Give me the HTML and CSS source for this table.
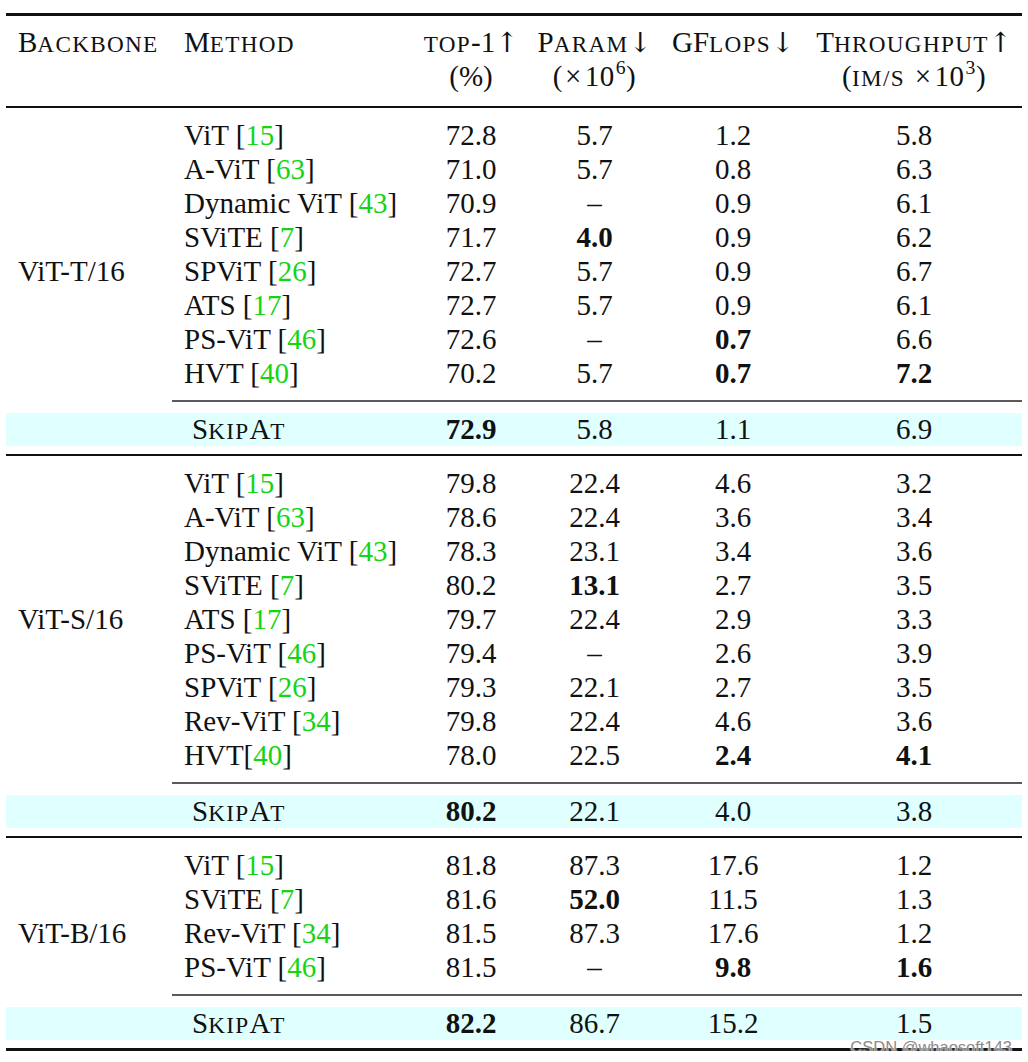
FILE: index.html
```html
<!DOCTYPE html>
<html>
<head>
<meta charset="utf-8">
<link rel="stylesheet" href="styles.css">
</head>
<body>
<div class="table">
  <div class="rule rule-thick"></div>
  <div class="head">
    <div class="row">
      <div class="c-bb">B<span class="sc">ackbone</span></div>
      <div class="c-m">M<span class="sc">ethod</span></div>
      <div class="c-n"><span class="sc">top</span>-1<span class="arr">↑</span></div>
      <div class="c-n">P<span class="sc">aram</span><span class="arr">↓</span></div>
      <div class="c-n">GF<span class="sc">lops</span><span class="arr">↓</span></div>
      <div class="c-n">T<span class="sc">hroughput</span><span class="arr">↑</span></div>
    </div>
    <div class="row">
      <div class="c-bb"></div>
      <div class="c-m"></div>
      <div class="c-n">(%)</div>
      <div class="c-n math">(<span class="times">×</span>10<sup>6</sup>)</div>
      <div class="c-n"></div>
      <div class="c-n math">(<span class="sc">im/s</span> <span class="times">×</span>10<sup>3</sup>)</div>
    </div>
  </div>
  <div class="rule rule-mid"></div>

  <div class="group">
    <div class="row"><div class="c-bb"></div><div class="c-m">ViT [<span class="cite">15</span>]</div><div class="c-n">72.8</div><div class="c-n">5.7</div><div class="c-n">1.2</div><div class="c-n">5.8</div></div>
    <div class="row"><div class="c-bb"></div><div class="c-m">A-ViT [<span class="cite">63</span>]</div><div class="c-n">71.0</div><div class="c-n">5.7</div><div class="c-n">0.8</div><div class="c-n">6.3</div></div>
    <div class="row"><div class="c-bb"></div><div class="c-m">Dynamic ViT [<span class="cite">43</span>]</div><div class="c-n">70.9</div><div class="c-n">–</div><div class="c-n">0.9</div><div class="c-n">6.1</div></div>
    <div class="row"><div class="c-bb"></div><div class="c-m">SViTE [<span class="cite">7</span>]</div><div class="c-n">71.7</div><div class="c-n b">4.0</div><div class="c-n">0.9</div><div class="c-n">6.2</div></div>
    <div class="row"><div class="c-bb">ViT-T/16</div><div class="c-m">SPViT [<span class="cite">26</span>]</div><div class="c-n">72.7</div><div class="c-n">5.7</div><div class="c-n">0.9</div><div class="c-n">6.7</div></div>
    <div class="row"><div class="c-bb"></div><div class="c-m">ATS [<span class="cite">17</span>]</div><div class="c-n">72.7</div><div class="c-n">5.7</div><div class="c-n">0.9</div><div class="c-n">6.1</div></div>
    <div class="row"><div class="c-bb"></div><div class="c-m">PS-ViT [<span class="cite">46</span>]</div><div class="c-n">72.6</div><div class="c-n">–</div><div class="c-n b">0.7</div><div class="c-n">6.6</div></div>
    <div class="row"><div class="c-bb"></div><div class="c-m">HVT [<span class="cite">40</span>]</div><div class="c-n">70.2</div><div class="c-n">5.7</div><div class="c-n b">0.7</div><div class="c-n b">7.2</div></div>
  </div>
  <div class="rule rule-part"></div>
  <div class="row ours"><div class="c-bb"></div><div class="c-m skip">S<span class="sc">kip</span>A<span class="sc">t</span></div><div class="c-n b">72.9</div><div class="c-n">5.8</div><div class="c-n">1.1</div><div class="c-n">6.9</div></div>
  <div class="rule rule-mid rule-after"></div>

  <div class="group">
    <div class="row"><div class="c-bb"></div><div class="c-m">ViT [<span class="cite">15</span>]</div><div class="c-n">79.8</div><div class="c-n">22.4</div><div class="c-n">4.6</div><div class="c-n">3.2</div></div>
    <div class="row"><div class="c-bb"></div><div class="c-m">A-ViT [<span class="cite">63</span>]</div><div class="c-n">78.6</div><div class="c-n">22.4</div><div class="c-n">3.6</div><div class="c-n">3.4</div></div>
    <div class="row"><div class="c-bb"></div><div class="c-m">Dynamic ViT [<span class="cite">43</span>]</div><div class="c-n">78.3</div><div class="c-n">23.1</div><div class="c-n">3.4</div><div class="c-n">3.6</div></div>
    <div class="row"><div class="c-bb"></div><div class="c-m">SViTE [<span class="cite">7</span>]</div><div class="c-n">80.2</div><div class="c-n b">13.1</div><div class="c-n">2.7</div><div class="c-n">3.5</div></div>
    <div class="row"><div class="c-bb">ViT-S/16</div><div class="c-m">ATS [<span class="cite">17</span>]</div><div class="c-n">79.7</div><div class="c-n">22.4</div><div class="c-n">2.9</div><div class="c-n">3.3</div></div>
    <div class="row"><div class="c-bb"></div><div class="c-m">PS-ViT [<span class="cite">46</span>]</div><div class="c-n">79.4</div><div class="c-n">–</div><div class="c-n">2.6</div><div class="c-n">3.9</div></div>
    <div class="row"><div class="c-bb"></div><div class="c-m">SPViT [<span class="cite">26</span>]</div><div class="c-n">79.3</div><div class="c-n">22.1</div><div class="c-n">2.7</div><div class="c-n">3.5</div></div>
    <div class="row"><div class="c-bb"></div><div class="c-m">Rev-ViT [<span class="cite">34</span>]</div><div class="c-n">79.8</div><div class="c-n">22.4</div><div class="c-n">4.6</div><div class="c-n">3.6</div></div>
    <div class="row"><div class="c-bb"></div><div class="c-m">HVT[<span class="cite">40</span>]</div><div class="c-n">78.0</div><div class="c-n">22.5</div><div class="c-n b">2.4</div><div class="c-n b">4.1</div></div>
  </div>
  <div class="rule rule-part"></div>
  <div class="row ours"><div class="c-bb"></div><div class="c-m skip">S<span class="sc">kip</span>A<span class="sc">t</span></div><div class="c-n b">80.2</div><div class="c-n">22.1</div><div class="c-n">4.0</div><div class="c-n">3.8</div></div>
  <div class="rule rule-mid rule-after"></div>

  <div class="group">
    <div class="row"><div class="c-bb"></div><div class="c-m">ViT [<span class="cite">15</span>]</div><div class="c-n">81.8</div><div class="c-n">87.3</div><div class="c-n">17.6</div><div class="c-n">1.2</div></div>
    <div class="row"><div class="c-bb"></div><div class="c-m">SViTE [<span class="cite">7</span>]</div><div class="c-n">81.6</div><div class="c-n b">52.0</div><div class="c-n">11.5</div><div class="c-n">1.3</div></div>
    <div class="row"><div class="c-bb">ViT-B/16</div><div class="c-m">Rev-ViT [<span class="cite">34</span>]</div><div class="c-n">81.5</div><div class="c-n">87.3</div><div class="c-n">17.6</div><div class="c-n">1.2</div></div>
    <div class="row"><div class="c-bb"></div><div class="c-m">PS-ViT [<span class="cite">46</span>]</div><div class="c-n">81.5</div><div class="c-n">–</div><div class="c-n b">9.8</div><div class="c-n b">1.6</div></div>
  </div>
  <div class="rule rule-part"></div>
  <div class="row ours"><div class="c-bb"></div><div class="c-m skip">S<span class="sc">kip</span>A<span class="sc">t</span></div><div class="c-n b">82.2</div><div class="c-n">86.7</div><div class="c-n">15.2</div><div class="c-n">1.5</div></div>
  <div class="rule rule-thick rule-after"></div>

  <div class="watermark">CSDN @whaosoft143</div>
</div>
</body>
</html>
```

FILE: styles.css
```css
html, body {
  margin: 0;
  padding: 0;
  background: #ffffff;
}

body {
  font-family: "Liberation Serif", "Times New Roman", serif;
  font-size: 29px;
  color: #111111;
}

.table {
  position: relative;
  width: 1016px;
  margin-left: 6px;
  padding-top: 13px;
}

.row {
  display: grid;
  grid-template-columns: 166px 241px 116px 131px 146px 216px;
  height: 34px;
  line-height: 34px;
  white-space: nowrap;
}

.c-bb {
  padding-left: 12px;
}

.c-m {
  padding-left: 12px;
}

.c-n {
  text-align: center;
}

.b {
  font-weight: bold;
}

.cite {
  color: #14d414;
}

.sc {
  text-transform: uppercase;
  font-size: 0.8em;
  letter-spacing: 1.3px;
}

.arr {
  font-family: "DejaVu Serif", "DejaVu Sans", serif;
  font-size: 0.95em;
}

.math {
  letter-spacing: 0.5px;
}

.times {
  display: inline-block;
  margin: 0 3px 0 2px;
}

sup {
  font-size: 0.68em;
  line-height: 0;
  vertical-align: 0.62em;
  margin-left: 1px;
}

.head {
  padding-top: 9px;
  padding-bottom: 13px;
}

.rule {
  background: #111111;
}

.rule-thick {
  height: 3px;
}

.rule-mid {
  height: 2px;
}

.rule-part {
  height: 2px;
  margin-left: 166px;
  margin-top: 10px;
  background: #5a5a5a;
}

.group {
  padding-top: 10px;
}

.ours {
  background: #e0ffff;
  margin-top: 11px;
  height: 33px;
  line-height: 33px;
}

.skip {
  padding-left: 20px;
}

.rule-after {
  margin-top: 8px;
}

.watermark {
  position: absolute;
  right: 10px;
  bottom: -2px;
  font-family: "Liberation Sans", "DejaVu Sans", sans-serif;
  font-size: 16.5px;
  line-height: 12px;
  height: 12px;
  color: #8a8a8a;
  text-shadow: 0 0 2px #ffffff, 0 0 2px #ffffff;
}
```
